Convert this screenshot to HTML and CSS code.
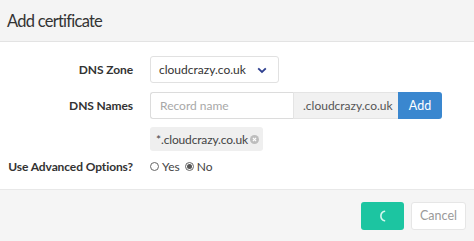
FILE: index.html
```html
<!DOCTYPE html>
<html>
<head>
<meta charset="utf-8">
<link rel="stylesheet" href="styles.css">
</head>
<body>
<div class="modal">
  <div class="modal-header"><h1 class="title">Add certificate</h1></div>
  <div class="modal-body">
    <div class="form-row row-zone">
      <label class="form-label">DNS Zone</label>
      <div class="select">
        <span class="select-value">cloudcrazy.co.uk</span>
        <svg class="chevron" width="10" height="7" viewBox="0 0 10 7"><path d="M1.2 1.3 L5 5 L8.8 1.3" fill="none" stroke="#2e3f8f" stroke-width="1.8"/></svg>
      </div>
    </div>
    <div class="form-row row-names">
      <label class="form-label">DNS Names</label>
      <div class="input-group">
        <input class="input" type="text" placeholder="Record name">
        <span class="addon">.cloudcrazy.co.uk</span>
        <button class="btn-add">Add</button>
      </div>
    </div>
    <div class="form-row row-tags">
      <span class="form-label"></span>
      <div class="tags">
        <span class="tag">*.cloudcrazy.co.uk<span class="tag-x">
          <svg width="9" height="9" viewBox="0 0 10 10"><circle cx="5" cy="5" r="5" fill="#bdbdbd"/><path d="M3.2 3.2 L6.8 6.8 M6.8 3.2 L3.2 6.8" stroke="#fff" stroke-width="1.3"/></svg>
        </span></span>
      </div>
    </div>
    <div class="form-row row-adv">
      <label class="form-label">Use Advanced Options?</label>
      <div class="radios">
        <span class="radio"><span class="radio-dot"></span>Yes</span>
        <span class="radio"><span class="radio-dot checked"></span>No</span>
      </div>
    </div>
  </div>
  <div class="modal-footer">
    <button class="btn-save"><svg width="12" height="12" viewBox="0 0 12 12"><path d="M7.5 1.2 A5 5 0 0 0 7.5 10.8" fill="none" stroke="#d4f7ef" stroke-width="1.6" stroke-linecap="round"/></svg></button>
    <button class="btn-cancel">Cancel</button>
  </div>
</div>
</body>
</html>
```

FILE: styles.css
```css
html, body {
  margin: 0;
  padding: 0;
  background: #ffffff;
}
body {
  font-family: Lato, "Noto Sans", "Liberation Sans", sans-serif;
  color: #333;
}
.modal {
  width: 474px;
  height: 241px;
  display: flex;
  flex-direction: column;
}
.modal-header {
  height: 41px;
  background: #f4f4f4;
  border-bottom: 1px solid #e3e3e3;
  display: flex;
  align-items: center;
  padding-left: 7px;
}
.title {
  margin: 0;
  font-size: 16.5px;
  font-weight: 400;
  color: #333;
  letter-spacing: -0.75px;
}
.modal-body {
  padding-top: 14px;
  flex: 1;
}
.form-row {
  display: flex;
  align-items: center;
}
.form-label {
  width: 133px;
  text-align: right;
  font-weight: 700;
  font-size: 12px;
  letter-spacing: -0.1px;
  color: #333;
  margin-right: 17px;
  flex: none;
  white-space: nowrap;
}
.row-names { margin-top: 9px; }
.row-tags { margin-top: 8px; }
.row-adv { margin-top: 8px; }

.select {
  width: 129px;
  height: 27px;
  box-sizing: border-box;
  border: 1px solid #e1e1e1;
  border-radius: 3px;
  display: flex;
  align-items: center;
  justify-content: space-between;
  padding: 0 11px 0 8px;
  font-size: 12px;
  color: #333;
}
.chevron { margin-top: 1px; }

.input-group {
  display: flex;
  height: 27px;
}
.input {
  width: 143px;
  height: 27px;
  box-sizing: border-box;
  border: 1px solid #dcdcdc;
  border-right: none;
  border-radius: 3px 0 0 3px;
  padding: 0 9px;
  font-family: inherit;
  font-size: 12px;
  outline: none;
}
.input::placeholder { color: #a8a8a8; }
.addon {
  width: 105px;
  box-sizing: border-box;
  background: #f1f1f1;
  border: 1px solid #e4e4e4;
  border-right: none;
  display: flex;
  align-items: center;
  padding-left: 9px;
  font-size: 12px;
  color: #555;
  white-space: nowrap;
}
.btn-add {
  width: 44px;
  height: 27px;
  border: none;
  background: #3a87cf;
  color: #fff;
  border-radius: 0 3px 3px 0;
  font-family: inherit;
  font-size: 12.5px;
  padding: 0;
}
.tag {
  display: inline-flex;
  align-items: center;
  height: 24px;
  box-sizing: border-box;
  background: #efefef;
  border-radius: 3px;
  padding: 0 4px 0 6px;
  font-size: 12px;
  letter-spacing: -0.15px;
  color: #444;
}
.tag-x {
  display: inline-flex;
  margin-left: 2px;
}
.radios {
  display: flex;
  align-items: center;
  font-size: 12px;
  color: #444;
}
.radio {
  display: inline-flex;
  align-items: center;
  margin-right: 5px;
}
.radio-dot {
  width: 9px;
  height: 9px;
  box-sizing: border-box;
  border: 1px solid #666;
  border-radius: 50%;
  margin-right: 3px;
  position: relative;
}
.radio-dot.checked::after {
  content: "";
  position: absolute;
  left: 1px;
  top: 1px;
  width: 5px;
  height: 5px;
  border-radius: 50%;
  background: #555;
}
.modal-footer {
  height: 51px;
  background: #f5f5f5;
  border-top: 1px solid #e8e8e8;
  display: flex;
  align-items: center;
  justify-content: flex-end;
  padding-right: 8px;
}
.btn-save {
  width: 43px;
  height: 28px;
  background: #1cc5a1;
  border: none;
  border-radius: 3px;
  display: flex;
  align-items: center;
  justify-content: center;
  padding: 0;
  margin-right: 7px;
}
.btn-cancel {
  width: 55px;
  height: 28px;
  background: #fff;
  border: 1px solid #e6e6e6;
  border-radius: 3px;
  color: #9a9a9a;
  font-family: inherit;
  font-size: 12.5px;
  padding: 0;
}
```
